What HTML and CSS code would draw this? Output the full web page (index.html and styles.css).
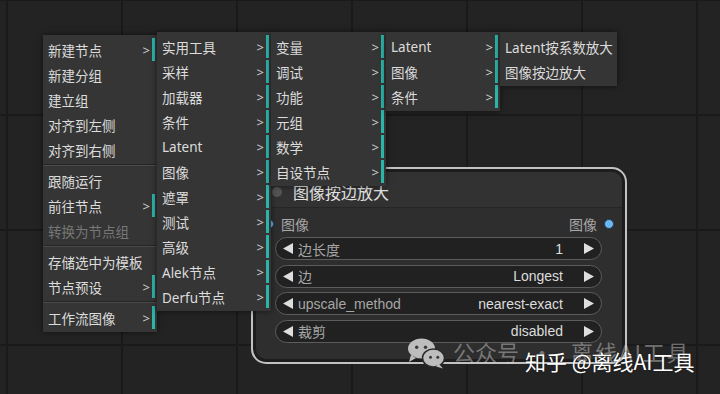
FILE: index.html
```html
<!DOCTYPE html>
<html lang="zh-CN">
<head>
  <meta charset="UTF-8" />
  <meta name="viewport" content="width=device-width, initial-scale=1.0" />
  <title>ComfyUI 右键菜单</title>
  <link rel="stylesheet" href="styles.css">
</head>
<body>
  <div class="canvas">

    <!-- 选中的节点 -->
    <div class="node">
      <div class="node-body">
        <div class="node-title">
          <span class="title-dot"></span>
          <span class="title-text">图像按边放大</span>
        </div>
        <div class="slots">
          <div class="slot">
            <span class="slot-dot"></span>
            <span>图像</span>
          </div>
          <div class="slot">
            <span>图像</span>
            <span class="slot-dot"></span>
          </div>
        </div>
        <div class="widgets">
          <div class="widget">
            <svg class="tri" viewBox="0 0 10 11"><polygon points="10,0 10,11 0,5.5" /></svg>
            <span class="w-label">边长度</span>
            <span class="w-value">1</span>
            <svg class="tri" viewBox="0 0 10 11"><polygon points="0,0 0,11 10,5.5" /></svg>
          </div>
          <div class="widget">
            <svg class="tri" viewBox="0 0 10 11"><polygon points="10,0 10,11 0,5.5" /></svg>
            <span class="w-label">边</span>
            <span class="w-value">Longest</span>
            <svg class="tri" viewBox="0 0 10 11"><polygon points="0,0 0,11 10,5.5" /></svg>
          </div>
          <div class="widget">
            <svg class="tri" viewBox="0 0 10 11"><polygon points="10,0 10,11 0,5.5" /></svg>
            <span class="w-label">upscale_method</span>
            <span class="w-value">nearest-exact</span>
            <svg class="tri" viewBox="0 0 10 11"><polygon points="0,0 0,11 10,5.5" /></svg>
          </div>
          <div class="widget">
            <svg class="tri" viewBox="0 0 10 11"><polygon points="10,0 10,11 0,5.5" /></svg>
            <span class="w-label">裁剪</span>
            <span class="w-value">disabled</span>
            <svg class="tri" viewBox="0 0 10 11"><polygon points="0,0 0,11 10,5.5" /></svg>
          </div>
        </div>
      </div>
    </div>

    <!-- 右键菜单 -->
    <div class="menu m1">
      <div class="item sub"><span class="label">新建节点</span><span class="arr">&gt;</span></div>
      <div class="item"><span class="label">新建分组</span></div>
      <div class="item"><span class="label">建立组</span></div>
      <div class="item"><span class="label">对齐到左侧</span></div>
      <div class="item"><span class="label">对齐到右侧</span></div>
      <div class="sep"></div>
      <div class="item"><span class="label">跟随运行</span></div>
      <div class="item sub"><span class="label">前往节点</span><span class="arr">&gt;</span></div>
      <div class="item disabled"><span class="label">转换为节点组</span></div>
      <div class="sep"></div>
      <div class="item"><span class="label">存储选中为模板</span></div>
      <div class="item sub"><span class="label">节点预设</span><span class="arr">&gt;</span></div>
      <div class="sep"></div>
      <div class="item sub"><span class="label">工作流图像</span><span class="arr">&gt;</span></div>
    </div>

    <div class="menu m2">
      <div class="item sub"><span class="label">实用工具</span><span class="arr">&gt;</span></div>
      <div class="item sub"><span class="label">采样</span><span class="arr">&gt;</span></div>
      <div class="item sub"><span class="label">加载器</span><span class="arr">&gt;</span></div>
      <div class="item sub"><span class="label">条件</span><span class="arr">&gt;</span></div>
      <div class="item sub"><span class="label">Latent</span><span class="arr">&gt;</span></div>
      <div class="item sub"><span class="label">图像</span><span class="arr">&gt;</span></div>
      <div class="item sub"><span class="label">遮罩</span><span class="arr">&gt;</span></div>
      <div class="item sub"><span class="label">测试</span><span class="arr">&gt;</span></div>
      <div class="item sub"><span class="label">高级</span><span class="arr">&gt;</span></div>
      <div class="item sub"><span class="label">Alek节点</span><span class="arr">&gt;</span></div>
      <div class="item sub"><span class="label">Derfu节点</span><span class="arr">&gt;</span></div>
    </div>

    <div class="menu m3">
      <div class="item sub"><span class="label">变量</span><span class="arr">&gt;</span></div>
      <div class="item sub"><span class="label">调试</span><span class="arr">&gt;</span></div>
      <div class="item sub"><span class="label">功能</span><span class="arr">&gt;</span></div>
      <div class="item sub"><span class="label">元组</span><span class="arr">&gt;</span></div>
      <div class="item sub"><span class="label">数学</span><span class="arr">&gt;</span></div>
      <div class="item sub"><span class="label">自设节点</span><span class="arr">&gt;</span></div>
    </div>

    <div class="menu m4">
      <div class="item sub"><span class="label">Latent</span><span class="arr">&gt;</span></div>
      <div class="item sub"><span class="label">图像</span><span class="arr">&gt;</span></div>
      <div class="item sub"><span class="label">条件</span><span class="arr">&gt;</span></div>
    </div>

    <div class="menu m5">
      <div class="item"><span class="label">Latent按系数放大</span></div>
      <div class="item"><span class="label">图像按边放大</span></div>
    </div>

    <!-- 水印 -->
    <svg class="wechat" viewBox="0 0 38 31">
      <polygon class="bubble" points="4,17 2,24 9,20" />
      <ellipse class="bubble" cx="14.5" cy="10.5" rx="13.5" ry="10" />
      <circle class="eye" cx="9.7" cy="9.3" r="1.7" />
      <circle class="eye" cx="18.5" cy="9.3" r="1.7" />
      <ellipse class="bubble front" cx="26.5" cy="20" rx="11" ry="9" />
      <polygon class="bubble" points="32,26 36,30.5 29,28.5" />
      <circle class="eye" cx="23.5" cy="19.3" r="1.5" />
      <circle class="eye" cx="30.8" cy="19.3" r="1.5" />
    </svg>
    <div class="wm-faded"><span>公众号</span><span>·</span><span class="wm-name">离线AI工具</span></div>
    <div class="wm-zhihu">知乎 @离线AI工具</div>
  </div>
</body>
</html>
```

FILE: styles.css
```css
body {
  margin: 0;
  background-color: #222;
}

.canvas {
  position: relative;
  width: 720px;
  height: 394px;
  overflow: hidden;
  background-color: #232323;
  background-image:
    linear-gradient(90deg, #1a1a1a 2px, transparent 2px),
    linear-gradient(0deg, #1a1a1a 2px, transparent 2px);
  background-size: 115px 115px;
  background-position: 6px 0, 0 1px;
}

/* ---------- menus ---------- */

.menu {
  position: absolute;
  top: 32px;
  width: 114px;
  box-sizing: border-box;
  padding: 3px 0;
  display: flex;
  flex-direction: column;
  gap: 2px;
  background-color: #353535;
  box-shadow: 0 0 6px rgba(0, 0, 0, 0.55);
  font-family: "Noto Sans", "Noto Sans CJK SC", sans-serif;
  font-size: 13.5px;
  color: #dcdcdc;
}

.m1 { left: 43px; top: 35px; }
.m2 { left: 157px; }
.m3 { left: 271px; width: 115px; }
.m4 { left: 386px; }
.m5 { left: 500px; width: 117px; }

.item {
  height: 23px;
  display: flex;
  align-items: center;
  padding-left: 5px;
  margin-right: 2px;
  white-space: nowrap;
}

.item .label {
  flex: 1;
}

.item.sub {
  border-right: 3px solid #2bb5a9;
}

.item .arr {
  color: #cfcfcf;
  margin-right: 2px;
  font-size: 13px;
}

.item.disabled {
  color: #777;
}

.sep {
  height: 0;
  margin: 1px 0;
  border-top: 1px solid #262626;
  border-bottom: 1px solid #4a4a4a;
}

/* ---------- node ---------- */

.node {
  position: absolute;
  left: 251px;
  top: 167px;
  width: 376px;
  height: 197px;
  box-sizing: border-box;
  padding: 3px;
  border: 2px solid #c2c2c2;
  border-radius: 15px;
  background-color: #1d1d1d;
}

.node-body {
  height: 100%;
  display: flex;
  flex-direction: column;
  background-color: #2e2e2e;
  border-radius: 10px;
  font-family: "Liberation Sans", "Noto Sans CJK SC", sans-serif;
  font-size: 14px;
}

.node-title {
  height: 36px;
  box-sizing: border-box;
  display: flex;
  align-items: center;
  padding: 4px 0 0 16px;
  gap: 11px;
  background-color: #323232;
  border-bottom: 1px solid #262626;
  border-radius: 10px 10px 0 0;
}

.title-dot {
  width: 10px;
  height: 10px;
  border-radius: 50%;
  background-color: #555;
}

.title-text {
  font-family: "Noto Sans CJK SC", sans-serif;
  font-size: 16px;
  color: #e2e2e2;
}

.slots {
  height: 20px;
  margin-top: 6px;
  padding: 0 8px;
  display: flex;
  justify-content: space-between;
  align-items: center;
  color: #a8a8a8;
}

.slot {
  display: flex;
  align-items: center;
  gap: 7px;
}

.slot-dot {
  width: 8px;
  height: 8px;
  border-radius: 50%;
  background-color: #6cb6f2;
  border: 1px solid #24405a;
}

.widgets {
  margin-top: 3px;
  padding: 0 20px 0 19px;
  display: flex;
  flex-direction: column;
  gap: 4.5px;
}

.widget {
  height: 23px;
  box-sizing: border-box;
  display: flex;
  align-items: center;
  padding: 0 7px;
  background-color: #212121;
  border: 1px solid #5c5c5c;
  border-radius: 12px;
}

.tri {
  width: 10px;
  height: 11px;
  fill: #dedede;
}

.w-label {
  flex: 1;
  margin-left: 5px;
  color: #a6a6a6;
}

.w-value {
  margin-right: 21px;
  color: #dcdcdc;
}

/* ---------- watermark ---------- */

.wechat {
  position: absolute;
  left: 407px;
  top: 338px;
  width: 38px;
  height: 31px;
}

.wechat .bubble {
  fill: #bdbdbd;
}

.wechat .front {
  stroke: #2a2a2a;
  stroke-width: 1.5;
}

.wechat .eye {
  fill: #3a3a3a;
}

.wm-faded {
  position: absolute;
  left: 453px;
  top: 340px;
  display: flex;
  gap: 12px;
  font-family: "Noto Sans CJK SC", sans-serif;
  font-size: 22px;
  line-height: 22px;
  color: rgba(215, 215, 215, 0.45);
}

.wm-name {
  margin-left: 6px;
  letter-spacing: 2px;
}

.wm-zhihu {
  position: absolute;
  left: 525px;
  top: 351px;
  font-family: "Noto Sans CJK SC", sans-serif;
  font-size: 21px;
  line-height: 21px;
  color: #fff;
  white-space: nowrap;
  text-shadow: 0 0 2px rgba(0, 0, 0, 0.4);
}
```
